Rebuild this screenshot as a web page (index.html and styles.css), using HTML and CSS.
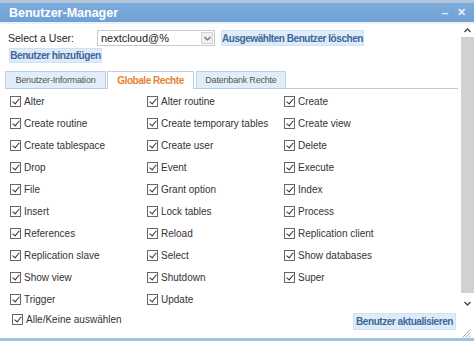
FILE: index.html
```html
<!DOCTYPE html>
<html lang="de">

<head>
  <meta charset="UTF-8">
  <title>Benutzer-Manager</title>
  <link rel="stylesheet" href="styles.css">
</head>

<body>
  <div class="window">
    <!-- Titelleiste -->
    <div class="titlebar">
      <span class="title">Benutzer-Manager</span>
      <span class="win-btn">&#8211;</span>
      <span class="win-btn close">&#10005;</span>
    </div>

    <div class="main">
      <div class="content">
        <div class="user-row">
          <span class="label">Select a User:</span>
          <div class="select">
            <span>nextcloud@%</span>
            <span class="select-arrow">
              <svg width="7" height="5" viewBox="0 0 7 5"><path d="M0.5 1 L3.5 4 L6.5 1" fill="none" stroke="#666" stroke-width="1.1"/></svg>
            </span>
          </div>
          <button class="btn del">Ausgewählten Benutzer löschen</button>
        </div>
        <div class="add-row">
          <button class="btn">Benutzer hinzufügen</button>
        </div>

        <div class="tabs">
          <div class="tab first">Benutzer-Information</div>
          <div class="tab active">Globale Rechte</div>
          <div class="tab last">Datenbank Rechte</div>
        </div>

        <div class="rights">
          <label class="right"><span class="cb"></span>Alter</label>
          <label class="right"><span class="cb"></span>Alter routine</label>
          <label class="right"><span class="cb"></span>Create</label>
          <label class="right"><span class="cb"></span>Create routine</label>
          <label class="right"><span class="cb"></span>Create temporary tables</label>
          <label class="right"><span class="cb"></span>Create view</label>
          <label class="right"><span class="cb"></span>Create tablespace</label>
          <label class="right"><span class="cb"></span>Create user</label>
          <label class="right"><span class="cb"></span>Delete</label>
          <label class="right"><span class="cb"></span>Drop</label>
          <label class="right"><span class="cb"></span>Event</label>
          <label class="right"><span class="cb"></span>Execute</label>
          <label class="right"><span class="cb"></span>File</label>
          <label class="right"><span class="cb"></span>Grant option</label>
          <label class="right"><span class="cb"></span>Index</label>
          <label class="right"><span class="cb"></span>Insert</label>
          <label class="right"><span class="cb"></span>Lock tables</label>
          <label class="right"><span class="cb"></span>Process</label>
          <label class="right"><span class="cb"></span>References</label>
          <label class="right"><span class="cb"></span>Reload</label>
          <label class="right"><span class="cb"></span>Replication client</label>
          <label class="right"><span class="cb"></span>Replication slave</label>
          <label class="right"><span class="cb"></span>Select</label>
          <label class="right"><span class="cb"></span>Show databases</label>
          <label class="right"><span class="cb"></span>Show view</label>
          <label class="right"><span class="cb"></span>Shutdown</label>
          <label class="right"><span class="cb"></span>Super</label>
          <label class="right"><span class="cb"></span>Trigger</label>
          <label class="right"><span class="cb"></span>Update</label>
        </div>
      </div>

      <!-- Scrollbar -->
      <div class="scrollbar">
        <div class="arrow-box">
          <svg width="7" height="5" viewBox="0 0 7 5"><path d="M0.5 4 L3.5 1 L6.5 4" fill="none" stroke="#444" stroke-width="1.3"/></svg>
        </div>
        <div class="thumb"></div>
        <div class="arrow-box down">
          <svg width="7" height="5" viewBox="0 0 7 5"><path d="M0.5 1 L3.5 4 L6.5 1" fill="none" stroke="#444" stroke-width="1.3"/></svg>
        </div>
      </div>
    </div>

    <div class="footer">
      <label class="right all"><span class="cb"></span>Alle/Keine auswählen</label>
      <button class="btn update">Benutzer aktualisieren</button>
      <svg class="grip" width="10" height="10" viewBox="0 0 10 10">
        <path d="M9.5 1.5 L1.5 9.5 M9.5 4.5 L4.5 9.5 M9.5 7.5 L7.5 9.5" stroke="#8fa9c4" stroke-width="1"/>
      </svg>
    </div>
    <div class="bottom-strip"></div>
  </div>
</body>

</html>
```

FILE: styles.css
```css
/* Fenster */
body {
  margin: 0;
  font-family: "Liberation Sans", Arial, sans-serif;
  font-size: 10px;
  color: #333;
}

.window {
  width: 474px;
  height: 341px;
  background: #fff;
  display: flex;
  flex-direction: column;
  overflow: hidden;
}

.titlebar {
  height: 24px;
  box-sizing: border-box;
  border-top: 3px solid #b3c5d8;
  border-bottom: 2px solid #eaf1f8;
  background: linear-gradient(#7cacdc, #70a1d4);
  display: flex;
  align-items: center;
  padding: 0 5px 0 9px;
  color: #fff;
}

.title {
  font-weight: bold;
  flex: 1;
  font-size: 12.5px;
}

.win-btn {
  color: #e4eefa;
  font-weight: bold;
  width: 16px;
  text-align: center;
  font-size: 12px;
}

.win-btn.close {
  font-size: 11px;
}

.main {
  display: flex;
  height: 286px;
}

.content {
  flex: 1;
  padding: 6px 0 0 8px;
}

.user-row {
  display: flex;
  align-items: center;
  height: 16px;
}

.label {
  width: 89px;
  font-size: 10.5px;
  color: #222;
}

.select {
  width: 118px;
  height: 16px;
  box-sizing: border-box;
  border: 1px solid #c9c9c9;
  display: flex;
  align-items: center;
  padding: 0 1px 0 3px;
  font-size: 11px;
  color: #222;
  justify-content: space-between;
}

.select-arrow {
  width: 12px;
  height: 12px;
  box-sizing: border-box;
  background: #eef0f2;
  border: 1px solid #d4d4d4;
  display: flex;
  align-items: center;
  justify-content: center;
}

.btn {
  font-family: "Liberation Sans", Arial, sans-serif;
  font-size: 10px;
  font-weight: bold;
  letter-spacing: -0.45px;
  white-space: nowrap;
  color: #3a6898;
  background: #dfebf8;
  border: 1px solid #d0e1f2;
  height: 16px;
  padding: 0;
}

.btn.del {
  width: 143px;
  margin-left: 6px;
}

.add-row {
  margin-top: 2px;
  padding-left: 1px;
}

.add-row .btn {
  width: 93px;
  height: 15px;
}

.tabs {
  display: flex;
  margin: 8px 0 0 -3px;
  width: 453px;
  border-bottom: 1px solid #b7cde3;
}

.tab {
  height: 17px;
  box-sizing: border-box;
  border: 1px solid #bdd2e7;
  border-bottom: none;
  background: #e2edf9;
  color: #555;
  font-size: 9px;
  letter-spacing: -0.2px;
  white-space: nowrap;
  display: flex;
  align-items: center;
  justify-content: center;
}

.tab.first {
  width: 101px;
}

.tab.active {
  background: #fff;
  color: #e8822e;
  font-weight: bold;
  font-size: 10px;
  letter-spacing: -0.45px;
  width: 87px;
  height: 18px;
  margin: 0 2px -1px 1px;
}

.tab.last {
  width: 90px;
}

.rights {
  display: grid;
  grid-template-columns: 137px 137px 137px;
  grid-auto-rows: 22px;
  margin: 1px 0 0 2px;
}

.right {
  display: flex;
  align-items: center;
  white-space: nowrap;
}

.cb {
  width: 11px;
  height: 11px;
  box-sizing: border-box;
  border: 1px solid #666;
  margin-right: 3px;
  position: relative;
}

.cb::after {
  content: "";
  position: absolute;
  left: 3px;
  top: 0;
  width: 3px;
  height: 6px;
  border: solid #333;
  border-width: 0 1px 1px 0;
  transform: rotate(40deg);
}

.scrollbar {
  width: 13px;
  display: flex;
  flex-direction: column;
}

.arrow-box {
  height: 12px;
  display: flex;
  align-items: center;
  justify-content: center;
}

.arrow-box.down {
  margin-top: 4px;
}

.thumb {
  height: 256px;
  background: #d1d1d1;
  margin-top: 1px;
}

.footer {
  display: flex;
  align-items: flex-start;
  height: 28px;
  padding: 3px 0 0 12px;
  box-sizing: border-box;
}

.footer .all {
  flex: 1;
  height: 12px;
}

.btn.update {
  height: 17px;
  width: 103px;
}

.grip {
  margin: 15px 3px 0 5px;
}

.bottom-strip {
  height: 3px;
  background: #9fc2e6;
}
```
